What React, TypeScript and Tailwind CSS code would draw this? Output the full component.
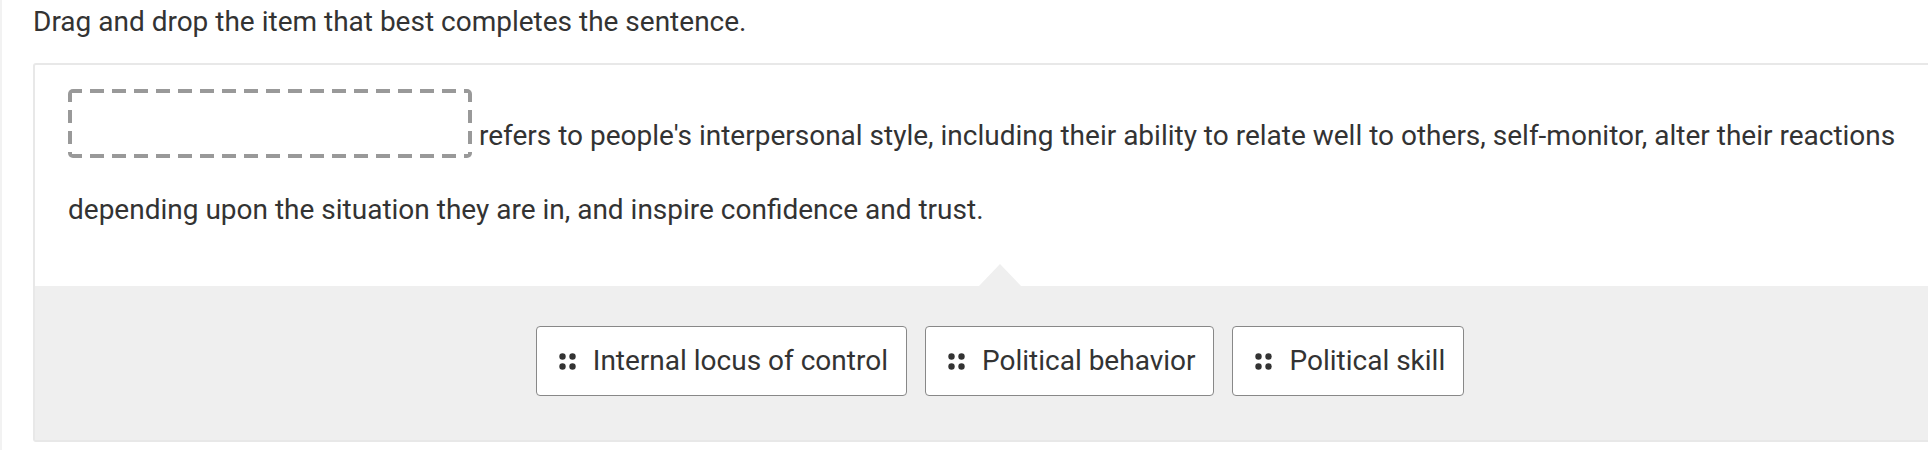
import React from "react";

function DragIcon() {
  return (
    <svg width="17" height="17" viewBox="0 0 17 17" className="shrink-0" aria-hidden="true">
      <circle cx="3.5" cy="3.5" r="3.2" fill="#333" />
      <circle cx="13.5" cy="3.5" r="3.2" fill="#333" />
      <circle cx="3.5" cy="13.5" r="3.2" fill="#333" />
      <circle cx="13.5" cy="13.5" r="3.2" fill="#333" />
    </svg>
  );
}

function Choice({ label }: { label: string }) {
  return (
    <button
      type="button"
      className="flex h-[70px] items-center gap-[17px] rounded-[4px] border border-[#888] bg-white pl-[22px] pr-[18px] text-[28px] leading-none text-[#333]"
    >
      <DragIcon />
      <span>{label}</span>
    </button>
  );
}

export default function App() {
  return (
    <div
      className="flex h-[450px] w-[1928px] overflow-hidden bg-white text-[#333]"
      style={{ fontFamily: "Roboto, 'Liberation Sans', sans-serif" }}
    >
      <div className="w-[2px] shrink-0 bg-[#f2f2f2]" />
      <div className="flex-1 pl-[31px]">
        <p className="mt-[6px] text-[28px] leading-[32px]">
          Drag and drop the item that best completes the sentence.
        </p>
        <div className="mt-[25px] w-[1934px] rounded-[3px] border-2 border-[#e8e8e8]">
          <p className="px-[33px] pt-[24px] pb-[39px] text-[28px] leading-[74px]">
            <span className="inline-block h-[69px] w-[404px] rounded-[5px] bg-no-repeat align-[-13px] [background-image:repeating-linear-gradient(90deg,#999_0_14px,transparent_14px_22px),repeating-linear-gradient(90deg,#999_0_14px,transparent_14px_22px),repeating-linear-gradient(180deg,#999_0_13px,transparent_13px_21px),repeating-linear-gradient(180deg,#999_0_13px,transparent_13px_21px)] [background-position:center_top,center_bottom,left_center,right_center] [background-size:100%_4px,100%_4px,4px_100%,4px_100%]" />{" "}
            refers to people's interpersonal style, including their ability to relate well to others, self-monitor, alter their reactions depending upon the situation they are in, and inspire confidence and trust.
          </p>
          <div className="relative bg-[#efefef] pt-[40px] pb-[44px]">
            <div className="absolute left-1/2 top-[-22px] h-0 w-0 -translate-x-1/2 border-x-[21px] border-b-[22px] border-x-transparent border-b-[#efefef]" />
            <div className="flex justify-center gap-[18px]">
              <Choice label="Internal locus of control" />
              <Choice label="Political behavior" />
              <Choice label="Political skill" />
            </div>
          </div>
        </div>
      </div>
    </div>
  );
}
